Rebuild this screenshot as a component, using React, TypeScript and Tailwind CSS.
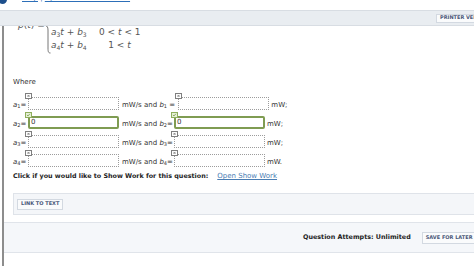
import type { ReactNode } from 'react';

// Tiny status marker sitting on the top-left corner of each answer box
function Marker({ ok }: { ok: boolean }) {
  if (ok) {
    return (
      <span className="absolute -left-[3px] -top-[4px] w-[7px] h-[6px] border border-[#8fae5c] bg-[#e6f0d6]">
        <svg viewBox="0 0 7 6" className="w-full h-full block">
          <path d="M1.2 3 L2.8 4.4 L5.6 1.2" fill="none" stroke="#5f8a2c" strokeWidth="1" />
        </svg>
      </span>
    );
  }
  return (
    <span className="absolute -left-[3px] -top-[4px] w-[7px] h-[6px] border border-[#7f7f7f] bg-white">
      <svg viewBox="0 0 7 6" className="w-full h-full block">
        <path d="M2 1.4 L5 4.4 M5 1.4 L2 4.4" fill="none" stroke="#444" strokeWidth="0.9" />
      </svg>
    </span>
  );
}

function AnswerBox({ value, ok }: { value?: string; ok: boolean }) {
  return (
    <div className="relative shrink-0">
      <Marker ok={ok} />
      {ok ? (
        <div className="w-[91px] h-[13px] border-2 border-[#7f9c52] rounded-[2px] bg-white pl-[1px] text-[7px] leading-[9px] text-[#333]">
          {value}
        </div>
      ) : (
        <div className="w-[91px] h-[13px] border border-dotted border-[#9c9c9c] bg-white" />
      )}
    </div>
  );
}

function Var({ name, idx, sub = 'text-[5px]' }: { name: string; idx: number; sub?: string }) {
  return (
    <span>
      <i>{name}</i>
      <sub className={sub}>{idx}</sub>
    </span>
  );
}

function AnswerRow({
  idx,
  ok,
  value,
  spaced,
  end,
}: {
  idx: number;
  ok: boolean;
  value?: string;
  spaced?: boolean;
  end: string;
}) {
  return (
    <div className="flex items-end h-[13px] text-[7px] leading-[9px] text-[#333]">
      <span className="w-[15px] shrink-0">
        <Var name="a" idx={idx} />=
      </span>
      <AnswerBox ok={ok} value={value} />
      <span className="ml-[3px] mr-[1px] whitespace-pre">
        mW/s and <Var name="b" idx={idx} />
        {spaced ? ' = ' : '='}
      </span>
      <AnswerBox ok={ok} value={value} />
      <span className="ml-[2px]">{end}</span>
    </div>
  );
}

function SmallButton({ children, className = '' }: { children: ReactNode; className?: string }) {
  return (
    <span
      className={`inline-flex items-center shrink-0 border border-[#d3d9e1] bg-[#fafbfc] text-[5px] font-bold text-[#4a5879] uppercase whitespace-nowrap ${className}`}
    >
      {children}
    </span>
  );
}

const conditions: ReactNode[] = [
  <>
    <i>t</i> &lt; −1
  </>,
  <>
    −1 &lt; <i>t</i> &lt; 0
  </>,
  <>
    0 &lt; <i>t</i> &lt; 1
  </>,
  <>
    1 &lt; <i>t</i>
  </>,
];

export default function App() {
  return (
    <div className="w-[474px] h-[266px] overflow-hidden bg-white font-['DejaVu_Sans',Verdana,sans-serif]">
      <div className="w-[500px] h-[266px] flex flex-col">
        {/* top strip, scrolled mostly out of view */}
        <div className="h-[10px] shrink-0 relative overflow-hidden">
          <div className="absolute -left-[2px] -top-[5px] w-[9px] h-[9px] rounded-full bg-[#1d4f8c]" />
          <div className="absolute left-[22px] -top-[6px] text-[7px] leading-[9px] text-[#2d6fb8] whitespace-nowrap">
            <span className="underline">Help</span> | <span className="underline">System Announcements</span>
          </div>
        </div>

        {/* toolbar */}
        <div className="h-[16px] shrink-0 bg-[#e9edf1] border-y border-[#d8dde3] flex items-center pl-[436px]">
          <SmallButton className="h-[9px] px-[3px]">Printer Version</SmallButton>
        </div>

        <div className="flex-1 flex min-h-0">
          <div className="w-[2px] ml-[2px] shrink-0 bg-[#8d8d8d]" />
          <main className="flex-1 min-w-0 overflow-hidden flex flex-col">
            {/* piecewise definition, top rows hidden under the toolbar */}
            <div className="flex items-center -mt-[28px] ml-[14px] text-[9px] text-[#555]">
              <span className="w-[29px] whitespace-nowrap">
                <i>p</i>(<i>t</i>) =
              </span>
              <svg width="5" height="56" viewBox="0 0 5 56" className="shrink-0 -ml-[1px]">
                <path
                  d="M4.5 1 C2 1 2 2 2 6 L2 24 C2 27 1 28 0.3 28 C1 28 2 29 2 32 L2 50 C2 54 2.5 55 4.5 55"
                  fill="none"
                  stroke="#666"
                  strokeWidth="0.9"
                />
              </svg>
              <div className="flex flex-col">
                {[1, 2, 3, 4].map((n) => (
                  <div key={n} className="flex h-[13px] items-center leading-[13px] whitespace-nowrap">
                    <span className="w-[48px]">
                      <Var name="a" idx={n} sub="text-[6px]" />
                      <i>t</i> + <Var name="b" idx={n} sub="text-[6px]" />
                    </span>
                    <span className="w-[41px] text-center">{conditions[n - 1]}</span>
                  </div>
                ))}
              </div>
            </div>

            <div className="pl-[9px] mt-[24px] text-[7px] leading-[9px] text-[#333]">Where</div>

            <div className="pl-[9px] mt-[10px] flex flex-col gap-[6px]">
              <AnswerRow idx={1} ok={false} spaced end="mW;" />
              <AnswerRow idx={2} ok value="0" end="mW;" />
              <AnswerRow idx={3} ok={false} end="mW;" />
              <AnswerRow idx={4} ok={false} end="mW." />
            </div>

            <div className="pl-[9px] mt-[5px] flex items-center leading-[9px] whitespace-nowrap">
              <span className="text-[6.4px] font-bold text-[#222]">
                Click if you would like to Show Work for this question:
              </span>
              <span className="ml-[9px] text-[7px] text-[#4a7db3] underline">Open Show Work</span>
            </div>

            <div className="ml-[9px] mt-[12px] h-[22px] shrink-0 bg-[#f4f6f9] border border-[#dfe3e9] flex items-center pl-[3px]">
              <SmallButton className="h-[11px] px-[3px]">Link to Text</SmallButton>
            </div>

            <div className="mt-[7px] h-[31px] shrink-0 bg-[#f5f7fa] border-y border-[#e0e4ea] flex items-center gap-[11px] pl-[299px]">
              <span className="text-[6.4px] font-bold text-[#222] whitespace-nowrap">Question Attempts: Unlimited</span>
              <SmallButton className="h-[12px] px-[3px]">Save for Later</SmallButton>
            </div>
          </main>
        </div>
      </div>
    </div>
  );
}
